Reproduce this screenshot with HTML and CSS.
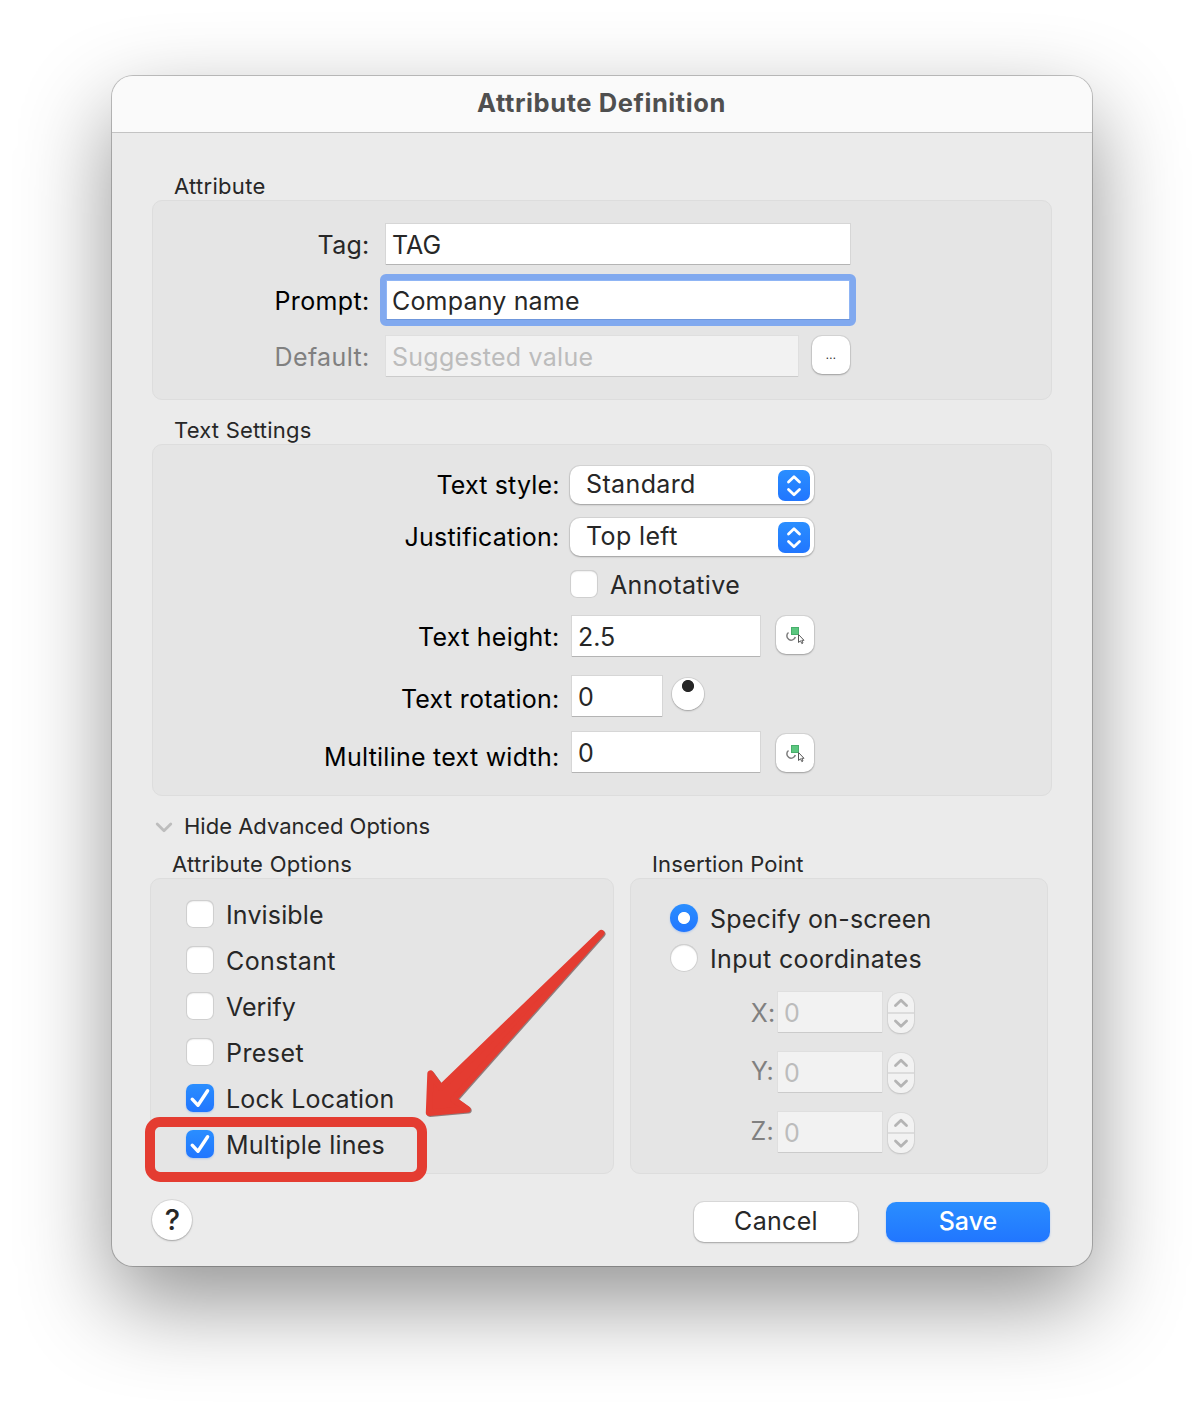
FILE: index.html
```html
<!DOCTYPE html>
<html lang="en">
<head>
<meta charset="utf-8">
<title>Attribute Definition</title>
<link rel="stylesheet" href="styles.css">
</head>
<body>
<svg class="defs" width="0" height="0" aria-hidden="true">
  <defs>
    <symbol id="updown" viewBox="0 0 32 31"><path d="M10.500 12 16 6.800 21.500 12M10.500 19.500 16 24.700 21.500 19.500" fill="none" stroke="#fff" stroke-width="2.800" stroke-linecap="round" stroke-linejoin="round"/></symbol>
    <symbol id="check" viewBox="0 0 28 28"><path d="M6.200 15.200 12 21.300 21.600 6.700" fill="none" stroke="#fff" stroke-width="3.400" stroke-linecap="round" stroke-linejoin="round"/></symbol>
    <symbol id="pick" viewBox="0 0 38 38">
      <path d="M12.500 16.500A4.300 4.300 0 1 0 19.300 21" fill="none" stroke="#7d7d7d" stroke-width="1.500"/>
      <rect x="15.500" y="11.500" width="7" height="7" fill="#5cc780" stroke="#47ae6b"/>
      <path d="M22.500 18.500v8l2-1.700 1.300 2.800 1.200-.6-1.200-2.700h2.200z" fill="#fff" stroke="#5a5a5a" stroke-width="1"/>
    </symbol>
    <symbol id="steps" viewBox="0 0 26 40"><path d="M7.500 12.500 13 7.300 18.500 12.500M7.500 28 13 33.200 18.500 28" fill="none" stroke="#b4b4b4" stroke-width="2.800" stroke-linecap="round" stroke-linejoin="round"/><path d="M0 20H26" stroke="#dcdcdc" stroke-width="2"/></symbol>
  </defs>
</svg>
<main class="window">
  <header class="titlebar"><h1>Attribute Definition</h1></header>
  <div class="content">
    <h2 class="caption t-attribute">Attribute</h2>
    <section class="group attribute">
      <div class="row"><label class="dark t-tag">Tag:</label><div class="field wide">TAG</div></div>
      <div class="row"><label class="t-prompt">Prompt:</label><div class="field wide focused t-company">Company name</div></div>
      <div class="row"><label class="dim t-default">Default:</label><div class="field disabled suggested">Suggested value</div><button class="square more">...</button></div>
    </section>

    <h2 class="caption t-settings">Text Settings</h2>
    <section class="group settings">
      <div class="row style"><label class="t-style">Text style:</label><div class="select">Standard<span class="arrows"><svg><use href="#updown"/></svg></span></div></div>
      <div class="row just"><label class="t-just">Justification:</label><div class="select">Top left<span class="arrows"><svg><use href="#updown"/></svg></span></div></div>
      <div class="row anno"><span class="box"></span><span class="t-anno">Annotative</span></div>
      <div class="row height"><label>Text height:</label><div class="field number">2.5</div><button class="square"><svg><use href="#pick"/></svg></button></div>
      <div class="row rotation"><label>Text rotation:</label><div class="field short">0</div><span class="knob"></span></div>
      <div class="row width"><label>Multiline text width:</label><div class="field number">0</div><button class="square"><svg><use href="#pick"/></svg></button></div>
    </section>

    <div class="disclosure"><svg width="18" height="12" viewBox="0 0 18 12"><path d="M2.200 2 9 8.800 15.800 2" fill="none" stroke="#bdbdbd" stroke-width="2.800" stroke-linecap="round" stroke-linejoin="round"/></svg><span>Hide Advanced Options</span></div>

    <div class="columns">
      <div class="column options-col">
        <h2 class="caption t-options">Attribute Options</h2>
        <section class="group options">
          <div class="option"><span class="box"></span><span class="t-invisible">Invisible</span></div>
          <div class="option"><span class="box"></span><span class="t-constant">Constant</span></div>
          <div class="option"><span class="box"></span><span class="t-verify">Verify</span></div>
          <div class="option"><span class="box"></span><span class="t-preset">Preset</span></div>
          <div class="option"><span class="box on"><svg><use href="#check"/></svg></span><span class="t-lock">Lock Location</span></div>
          <div class="option"><span class="box on"><svg><use href="#check"/></svg></span><span class="t-multi">Multiple lines</span></div>
          <div class="highlight"></div>
          <svg class="arrow" width="200" height="200" viewBox="415 925 200 200"><path d="M601.300 933 440.800 1087.700 430.500 1073.700 429 1112.700 467.500 1109.300 453.500 1099.300Z" fill="#e43c31" stroke="#e43c31" stroke-width="6.400" stroke-linejoin="round"/></svg>
        </section>
      </div>
      <div class="column insertion-col">
        <h2 class="caption t-insertion">Insertion Point</h2>
        <section class="group insertion">
          <div class="option"><span class="radio on"></span><span class="t-specify">Specify on-screen</span></div>
          <div class="option"><span class="radio"></span><span class="t-input">Input coordinates</span></div>
          <div class="axis x"><label class="dim">X:</label><div class="field disabled">0</div><span class="stepper"><svg><use href="#steps"/></svg></span></div>
          <div class="axis"><label class="dim">Y:</label><div class="field disabled">0</div><span class="stepper"><svg><use href="#steps"/></svg></span></div>
          <div class="axis"><label class="dim">Z:</label><div class="field disabled">0</div><span class="stepper"><svg><use href="#steps"/></svg></span></div>
        </section>
      </div>
    </div>

    <footer class="actions">
      <button class="help">?</button>
      <button class="button cancel">Cancel</button>
      <button class="button primary">Save</button>
    </footer>
  </div>
</main>
</body>
</html>
```
FILE: styles.css
```css
* { box-sizing: border-box; }
body {
  margin: 0;
  height: 1414px;
  padding: 76px 112px 0;
  background: #fff;
  font: 25px/40px Inter, "Liberation Sans", sans-serif;
  color: #272727;
  overflow: hidden;
}
.defs { position: absolute; }
button { border: 0; padding: 0; font: inherit; color: inherit; }
h1, h2 { margin: 0; }
svg { display: block; }
label { color: #000; text-align: right; white-space: nowrap; flex: none; letter-spacing: .25px; }
label.dark { color: #272727; }
label.dim { color: #808080; }

.window {
  width: 980px;
  height: 1190px;
  border-radius: 21px;
  background: #ebebeb;
  box-shadow: 0 0 0 1px rgba(0,0,0,.22), 0 36px 90px rgba(0,0,0,.43);
}
.titlebar {
  height: 57px;
  border-radius: 21px 21px 0 0;
  background: #fafafa;
  border-bottom: 1px solid #c3c3c3;
  text-align: center;
}
.titlebar h1 { font-size: 25.5px; font-weight: 700; line-height: 54px; letter-spacing: .58px; color: #4f4f4f; padding-right: 1px; }
.content { padding: 39px 40px 0; }
.caption { font-size: 22px; font-weight: 400; line-height: 28px; height: 28px; padding-left: 22px; white-space: nowrap; }
.group { border: 1px solid #dddddd; border-radius: 10px; background: #e5e5e5; }
.row { display: flex; align-items: flex-start; height: 40px; }

.attribute { height: 200px; padding: 23px 0; margin-bottom: 16px; display: flex; flex-direction: column; gap: 16px; }
.attribute label { width: 216.5px; margin-right: 16.5px; padding-top: 1px; }
.field {
  height: 40px;
  padding: 1px 0 0 6px;
  background: #fff;
  box-shadow: 0 1px 0 #b4b4b4, 0 0 0 1px #d6d6d6;
  white-space: nowrap;
}
.field.wide { width: 464px; }
.field.focused {
  width: 476px;
  height: 52px;
  margin: -6px;
  border: 6px solid #81a9ef;
  border-radius: 6px;
  box-shadow: inset 0 -1px #6f97dc, inset 0 0 0 1px #8fb5f5;
}
.field.disabled { background: #f2f2f2; color: #bcbcbc; box-shadow: 0 1px 0 #cbcbcb, 0 0 0 1px #dfdfdf; }
.field.suggested { width: 412px; }
.square {
  width: 38px;
  height: 38px;
  border-radius: 10px;
  background: #fff;
  box-shadow: 0 0 0 1px rgba(0,0,0,.07), 0 1px 2px rgba(0,0,0,.25);
}
.square svg { width: 38px; height: 38px; }
.more { margin-left: 14px; font-size: 11px; line-height: 36px; letter-spacing: .4px; }

.settings { height: 352px; padding-top: 21px; margin-bottom: 16px; }
.settings label { width: 406.5px; margin-right: 10.5px; }
.row.style, .row.just { height: 52px; }
.select {
  display: flex;
  justify-content: space-between;
  width: 244px;
  height: 38px;
  padding: 4px 4px 0 16px;
  border-radius: 10px;
  background: #fff;
  line-height: 28px;
  letter-spacing: .37px;
  box-shadow: 0 0 0 1px rgba(0,0,0,.07), 0 1px 2px rgba(0,0,0,.25);
}
.arrows { width: 32px; height: 31px; border-radius: 7px; background: linear-gradient(#2a8eff, #2176ff); }
.arrows svg { width: 32px; height: 31px; }
.style label, .just label { line-height: 38px; }
.row.anno { height: 46px; padding-left: 417px; gap: 12px; line-height: 30px; }
.row.height { height: 60px; }
.height label { padding-top: 1px; }
.height .field, .rotation .field, .width .field { margin-left: 2px; }
.number { width: 188px; }
.number + .square { margin-left: 16px; }
.row.rotation { height: 56px; }
.rotation label { padding-top: 3px; }
.short { width: 90px; }
.knob {
  width: 32px;
  height: 32px;
  margin: 2px 0 0 10px;
  border-radius: 50%;
  background: radial-gradient(circle at 16px 8px, #272727 5.600px, #fff 6.500px);
  box-shadow: 0 0 0 1px rgba(0,0,0,.07), 0 1px 2px rgba(0,0,0,.25);
}
.width label { padding-top: 5px; }
.width .square { margin-top: 2px; }

.box, .radio {
  flex: none;
  width: 28px;
  height: 28px;
  border-radius: 7px;
  background: #fff;
  box-shadow: inset 0 0 0 1px #cfcfcf, inset 0 1px 2px rgba(0,0,0,.2);
}
.radio { border-radius: 50%; }
.box.on, .radio.on { background: linear-gradient(#2a8eff, #2176ff); box-shadow: 0 1px 2px rgba(33,118,255,.25); }
.radio.on { background: radial-gradient(circle, #fff 5.600px, transparent 6.500px), linear-gradient(#2a8eff, #2176ff); }
.box svg { width: 28px; height: 28px; }

.disclosure { display: flex; align-items: center; gap: 11px; height: 28px; padding-left: 3px; font-size: 22px; line-height: 28px; margin-bottom: 12px; }
.disclosure svg { margin-top: 4px; }
.columns { display: flex; gap: 16px; margin: -2px -2px 0; }
.options-col { width: 464px; }
.insertion-col { width: 418px; }
.options { position: relative; height: 296px; padding: 21px 0 0 35px; }
.option { display: flex; gap: 12px; height: 46px; line-height: 30px; white-space: nowrap; }
.highlight { position: absolute; left: -6px; top: 238px; width: 281.5px; height: 65px; border: 10px solid #e43c31; border-radius: 15px; }
.arrow { position: absolute; left: 263.5px; top: 45.5px; filter: drop-shadow(1px 1.500px 0 rgba(60,20,20,.5)); }
.insertion { height: 296px; padding: 25px 0 0 39px; }
.insertion .option { height: 40px; }
.axis { display: flex; height: 60px; }
.axis.x { margin-top: 8px; }
.axis label { width: 104px; margin-right: 4px; line-height: 39px; }
.axis.x label { width: 105.5px; margin-right: 2.5px; line-height: 42px; }
.axis .field { width: 104px; }
.stepper { width: 26px; height: 40px; margin: 1px 0 0 6px; border-radius: 12px; background: #f2f2f2; box-shadow: 0 0 0 1px rgba(0,0,0,.04), 0 1px 2px rgba(0,0,0,.12); }
.stepper svg { width: 26px; height: 40px; }

.actions { display: flex; align-items: flex-start; margin-top: 26px; padding-right: 2px; }
.help { width: 40px; height: 40px; border-radius: 50%; background: #fff; font-size: 29px; font-weight: 500; padding-left: 1px; box-shadow: 0 0 0 1px rgba(0,0,0,.07), 0 1px 2px rgba(0,0,0,.25); }
.button { width: 164px; height: 40px; margin-top: 2px; border-radius: 10px; background: #fff; padding-bottom: 2px; line-height: 38px; letter-spacing: .3px; box-shadow: 0 0 0 1px rgba(0,0,0,.07), 0 1px 2px rgba(0,0,0,.25); }
.cancel { margin-left: auto; }
.primary { margin-left: 28px; background: linear-gradient(#2a8eff, #2176ff); color: #fff; font-weight: 500; letter-spacing: 0; box-shadow: 0 1px 2px rgba(33,118,255,.3); }

/* optical tracking */
.t-attribute { letter-spacing: .3px; }
.t-prompt, .t-default { letter-spacing: .35px; }
.t-company { letter-spacing: .18px; }
.suggested { letter-spacing: .25px; }
.t-settings { letter-spacing: .2px; }
.t-style { letter-spacing: .15px; }
.t-anno { letter-spacing: .36px; }
.t-options { letter-spacing: .26px; }
.t-insertion { letter-spacing: .14px; }
.t-invisible { letter-spacing: .15px; }
.t-constant { letter-spacing: .43px; }
.t-preset { letter-spacing: .42px; }
.t-lock { letter-spacing: .2px; }
.t-multi { letter-spacing: .24px; }
.t-specify { letter-spacing: .19px; }
.t-input { letter-spacing: .36px; }
```
